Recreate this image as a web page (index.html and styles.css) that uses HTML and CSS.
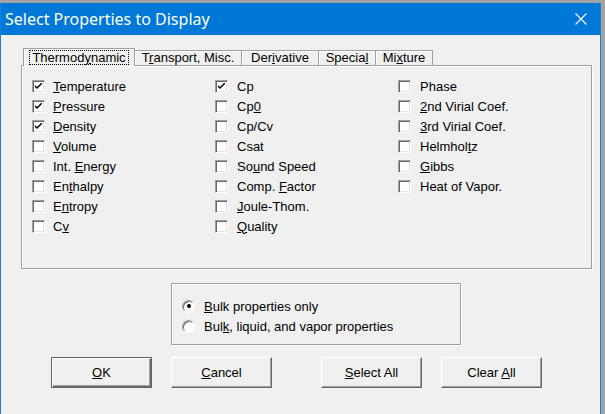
FILE: index.html
```html
<!DOCTYPE html>
<html>
<head>
<meta charset="utf-8">
<link rel="stylesheet" href="styles.css">
</head>
<body>
<div class="window">
  <div class="titlebar">
    <span class="title">Select Properties to Display</span>
    <svg class="close" width="12" height="12" viewBox="0 0 12 12"><path d="M0.5 0.5 L11.5 11.5 M11.5 0.5 L0.5 11.5" stroke="#fff" stroke-width="1.1" fill="none"/></svg>
  </div>
  <div class="content">
    <div class="tabs">
      <div class="tab active t1"><span class="focus">Thermod<u>y</u>namic</span></div>
      <div class="tab t2">T<u>r</u>ansport, Misc.</div>
      <div class="tab t3">Der<u>i</u>vative</div>
      <div class="tab t4">Specia<u>l</u></div>
      <div class="tab t5">Mi<u>x</u>ture</div>
    </div>
    <div class="panel">
      <div class="col">
        <div class="row"><span class="cb checked"><svg width="7" height="7" viewBox="0 0 7 7"><path d="M0 2 L0 4 L2 6 L7 1 L7 -1 L2 4 Z" fill="#000"/></svg></span><span><u>T</u>emperature</span></div>
        <div class="row"><span class="cb checked"><svg width="7" height="7" viewBox="0 0 7 7"><path d="M0 2 L0 4 L2 6 L7 1 L7 -1 L2 4 Z" fill="#000"/></svg></span><span><u>P</u>ressure</span></div>
        <div class="row"><span class="cb checked"><svg width="7" height="7" viewBox="0 0 7 7"><path d="M0 2 L0 4 L2 6 L7 1 L7 -1 L2 4 Z" fill="#000"/></svg></span><span><u>D</u>ensity</span></div>
        <div class="row"><span class="cb"></span><span><u>V</u>olume</span></div>
        <div class="row"><span class="cb"></span><span>Int. <u>E</u>nergy</span></div>
        <div class="row"><span class="cb"></span><span>En<u>t</u>halpy</span></div>
        <div class="row"><span class="cb"></span><span>E<u>n</u>tropy</span></div>
        <div class="row"><span class="cb"></span><span>C<u>v</u></span></div>
      </div>
      <div class="col">
        <div class="row"><span class="cb checked"><svg width="7" height="7" viewBox="0 0 7 7"><path d="M0 2 L0 4 L2 6 L7 1 L7 -1 L2 4 Z" fill="#000"/></svg></span><span>Cp</span></div>
        <div class="row"><span class="cb"></span><span>Cp<u>0</u></span></div>
        <div class="row"><span class="cb"></span><span>Cp/Cv</span></div>
        <div class="row"><span class="cb"></span><span>Csat</span></div>
        <div class="row"><span class="cb"></span><span>So<u>u</u>nd Speed</span></div>
        <div class="row"><span class="cb"></span><span>Comp. <u>F</u>actor</span></div>
        <div class="row"><span class="cb"></span><span><u>J</u>oule-Thom.</span></div>
        <div class="row"><span class="cb"></span><span><u>Q</u>uality</span></div>
      </div>
      <div class="col">
        <div class="row"><span class="cb"></span><span>Phase</span></div>
        <div class="row"><span class="cb"></span><span><u>2</u>nd Virial Coef.</span></div>
        <div class="row"><span class="cb"></span><span><u>3</u>rd Virial Coef.</span></div>
        <div class="row"><span class="cb"></span><span>Helmhol<u>t</u>z</span></div>
        <div class="row"><span class="cb"></span><span><u>G</u>ibbs</span></div>
        <div class="row"><span class="cb"></span><span>Heat of Vapor.</span></div>
      </div>
    </div>
    <div class="group">
      <div class="row"><span class="radio on"><span class="dot"></span></span><span><u>B</u>ulk properties only</span></div>
      <div class="row"><span class="radio"></span><span>Bul<u>k</u>, liquid, and vapor properties</span></div>
    </div>
    <div class="buttons">
      <div class="btn default"><span><u>O</u>K</span></div>
      <div class="btn b2"><span><u>C</u>ancel</span></div>
      <div class="btn b3"><span><u>S</u>elect All</span></div>
      <div class="btn b4"><span>Clear <u>A</u>ll</span></div>
    </div>
  </div>
</div>
</body>
</html>
```
FILE: styles.css
```css
html, body {
  margin: 0;
  padding: 0;
}
body {
  background: #a3a3a3;
  padding-top: 3px;
  width: 605px;
  height: 414px;
  overflow: hidden;
  font-family: "Liberation Sans", Arial, sans-serif;
  font-size: 13px;
  color: #000;
}
.window {
  width: 599px;
  height: 411px;
  border-left: 1px solid #1b7fd6;
  border-right: 1px solid #1b7fd6;
  background: #f0f0f0;
}
.titlebar {
  height: 32px;
  background: #0078d7;
  color: #fff;
  display: flex;
  align-items: center;
  justify-content: space-between;
  padding: 0 13px 0 4px;
}
.title {
  font-family: "Noto Sans", "Open Sans", sans-serif;
  font-size: 16px;
  padding-bottom: 1px;
}
.close {
  display: block;
}
.content {
  padding: 13px 9px 0 20px;
}
.tabs {
  display: flex;
  align-items: flex-end;
  height: 17px;
  margin-left: 2px;
  position: relative;
  z-index: 1;
}
.tab {
  box-sizing: border-box;
  height: 15px;
  border-top: 1px solid #a0a0a0;
  border-left: 1px solid #a0a0a0;
  border-right: 1px solid #a0a0a0;
  box-shadow: inset 1px 1px #fff;
  line-height: 14px;
  text-align: center;
  white-space: nowrap;
}
.tab + .tab {
  border-left: none;
}
.tab.active + .tab {
  border-left: none;
}
.tab.active {
  height: 18px;
  margin-bottom: -1px;
  background: #f0f0f0;
  padding-top: 1px;
}
.t1 { width: 112px; }
.t2 { width: 107px; }
.t3 { width: 77px; }
.t4 { width: 57px; }
.t5 { width: 57px; }
.focus {
  display: inline-block;
  border: 1px dotted #000;
  padding: 0 2px;
  line-height: 13px;
}
.panel {
  box-sizing: border-box;
  width: 571px;
  height: 204px;
  border: 1px solid #a0a0a0;
  box-shadow: inset 1px 1px #fff, 1px 1px #fff;
  display: grid;
  grid-template-columns: 183px 183px 1fr;
  padding: 10px 0 0 10px;
}
.row {
  height: 20px;
  display: flex;
  align-items: center;
  white-space: nowrap;
}
.cb {
  box-sizing: border-box;
  width: 13px;
  height: 13px;
  flex: none;
  background: #fff;
  border-style: solid;
  border-width: 1px;
  border-color: #a0a0a0 #fff #fff #a0a0a0;
  box-shadow: inset 1px 1px #696969, inset -1px -1px #e3e3e3;
  margin-right: 8px;
  display: flex;
  align-items: center;
  justify-content: center;
}
.cb svg {
  display: block;
}
.col:nth-child(2) .cb, .col:nth-child(3) .cb {
  margin-right: 9px;
}
.group {
  box-sizing: border-box;
  margin: 14px 0 0 150px;
  width: 290px;
  height: 62px;
  border: 1px solid #a0a0a0;
  box-shadow: inset 1px 1px #fff, 1px 1px #fff;
  padding: 12px 0 0 10px;
}
.radio {
  box-sizing: border-box;
  width: 13px;
  height: 13px;
  flex: none;
  border-radius: 50%;
  background: #fff;
  border: 1px solid;
  border-color: #a0a0a0 #fff #fff #a0a0a0;
  box-shadow: inset 1px 1px #696969;
  margin-right: 9px;
  display: flex;
  align-items: center;
  justify-content: center;
}
.dot {
  width: 4px;
  height: 4px;
  border-radius: 50%;
  background: #000;
}
.buttons {
  display: flex;
  margin: 12px 0 0 30px;
}
.btn {
  box-sizing: border-box;
  width: 101px;
  height: 31px;
  border-style: solid;
  border-width: 1px;
  border-color: #fff #696969 #696969 #fff;
  box-shadow: inset -1px -1px #a0a0a0;
  display: flex;
  align-items: center;
  justify-content: center;
}
.btn.default {
  border: 1px solid #646464;
  box-shadow: inset 1px 1px #fff, inset -1px -1px #696969, inset -2px -2px #a0a0a0;
}
.b2 { margin-left: 19px; }
.b3 { margin-left: 49px; }
.b4 { margin-left: 19px; }
```
